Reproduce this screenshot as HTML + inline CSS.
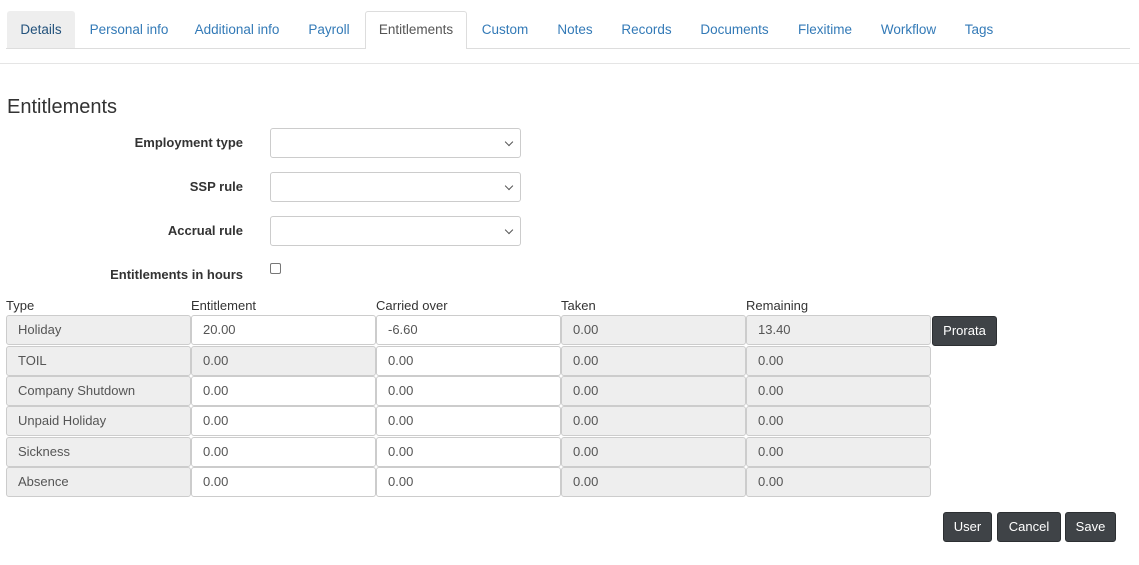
<!DOCTYPE html>
<html><head><style>
*{box-sizing:border-box;margin:0;padding:0}
body{width:1139px;height:565px;background:#fff;font-family:"Liberation Sans",Arial,sans-serif;font-size:13px;color:#333;position:relative;overflow:hidden}
.a{position:absolute}
.tab{position:absolute;top:11px;height:37px;line-height:37px;text-align:center;color:#337ab7;font-size:13.5px}
.sel{border:1px solid #ccc;border-radius:3px;background:#fff;width:251px;height:30px}
.sel:after{content:"";position:absolute;right:8px;top:10px;width:5px;height:5px;border-right:1.5px solid #555;border-bottom:1.5px solid #555;transform:rotate(45deg)}
.lbl{position:absolute;right:896px;font-weight:bold;font-size:13px}
.c{position:absolute;width:185px;height:30px;border:1px solid #ccc;border-radius:3px;line-height:28px;padding-left:11px;color:#555;font-size:13px}
.g{background:#eee}
.w{background:#fff}
.b{position:absolute;background:#3f4347;color:#fff;border:1px solid #2c2f32;border-radius:3px;text-align:center;font-size:13px}
.h{position:absolute;top:298px;font-size:13px}
</style></head><body>
<div class="a" style="left:6px;top:48px;width:1124px;border-top:1px solid #ddd"></div>
<div class="a" style="left:0;top:63px;width:1139px;border-top:1px solid #e5e5e5"></div>
<div class="tab" style="left:7px;width:68px;background:#eee;color:#23527c;border-radius:3px 3px 0 0">Details</div>
<div class="tab" style="left:77px;width:104px">Personal info</div>
<div class="tab" style="left:181px;width:112px">Additional info</div>
<div class="tab" style="left:293px;width:72px">Payroll</div>
<div class="tab" style="left:365px;width:102px;height:38px;background:#fff;color:#555;border:1px solid #ddd;border-bottom:none;border-radius:3px 3px 0 0;line-height:36px">Entitlements</div>
<div class="tab" style="left:467px;width:76px">Custom</div>
<div class="tab" style="left:543px;width:64px">Notes</div>
<div class="tab" style="left:607px;width:79px">Records</div>
<div class="tab" style="left:686px;width:97px">Documents</div>
<div class="tab" style="left:783px;width:84px">Flexitime</div>
<div class="tab" style="left:867px;width:83px">Workflow</div>
<div class="tab" style="left:950px;width:58px">Tags</div>
<div class="a" style="left:7px;top:96px;font-size:20px">Entitlements</div>
<div class="lbl" style="top:135px">Employment type</div>
<div class="lbl" style="top:179px">SSP rule</div>
<div class="lbl" style="top:223px">Accrual rule</div>
<div class="lbl" style="top:267px">Entitlements in hours</div>
<div class="a sel" style="left:270px;top:128px"></div>
<div class="a sel" style="left:270px;top:172px"></div>
<div class="a sel" style="left:270px;top:216px"></div>
<div class="a" style="left:270px;top:263px;width:11px;height:11px;border:1px solid #777;border-radius:2px"></div>
<div class="h" style="left:6px">Type</div>
<div class="h" style="left:191px">Entitlement</div>
<div class="h" style="left:376px">Carried over</div>
<div class="h" style="left:561px">Taken</div>
<div class="h" style="left:746px">Remaining</div>
<div class="c g" style="left:6px;top:315px">Holiday</div><div class="c w" style="left:191px;top:315px">20.00</div><div class="c w" style="left:376px;top:315px">-6.60</div><div class="c g" style="left:561px;top:315px">0.00</div><div class="c g" style="left:746px;top:315px">13.40</div>
<div class="c g" style="left:6px;top:346px">TOIL</div><div class="c g" style="left:191px;top:346px">0.00</div><div class="c w" style="left:376px;top:346px">0.00</div><div class="c g" style="left:561px;top:346px">0.00</div><div class="c g" style="left:746px;top:346px">0.00</div>
<div class="c g" style="left:6px;top:376px">Company Shutdown</div><div class="c w" style="left:191px;top:376px">0.00</div><div class="c w" style="left:376px;top:376px">0.00</div><div class="c g" style="left:561px;top:376px">0.00</div><div class="c g" style="left:746px;top:376px">0.00</div>
<div class="c g" style="left:6px;top:406px">Unpaid Holiday</div><div class="c w" style="left:191px;top:406px">0.00</div><div class="c w" style="left:376px;top:406px">0.00</div><div class="c g" style="left:561px;top:406px">0.00</div><div class="c g" style="left:746px;top:406px">0.00</div>
<div class="c g" style="left:6px;top:437px">Sickness</div><div class="c w" style="left:191px;top:437px">0.00</div><div class="c w" style="left:376px;top:437px">0.00</div><div class="c g" style="left:561px;top:437px">0.00</div><div class="c g" style="left:746px;top:437px">0.00</div>
<div class="c g" style="left:6px;top:467px">Absence</div><div class="c w" style="left:191px;top:467px">0.00</div><div class="c w" style="left:376px;top:467px">0.00</div><div class="c g" style="left:561px;top:467px">0.00</div><div class="c g" style="left:746px;top:467px">0.00</div>
<div class="b" style="left:932px;top:316px;width:65px;height:30px;line-height:28px">Prorata</div>
<div class="b" style="left:943px;top:512px;width:49px;height:30px;line-height:28px">User</div>
<div class="b" style="left:997px;top:512px;width:64px;height:30px;line-height:28px">Cancel</div>
<div class="b" style="left:1065px;top:512px;width:51px;height:30px;line-height:28px">Save</div>
</body></html>
